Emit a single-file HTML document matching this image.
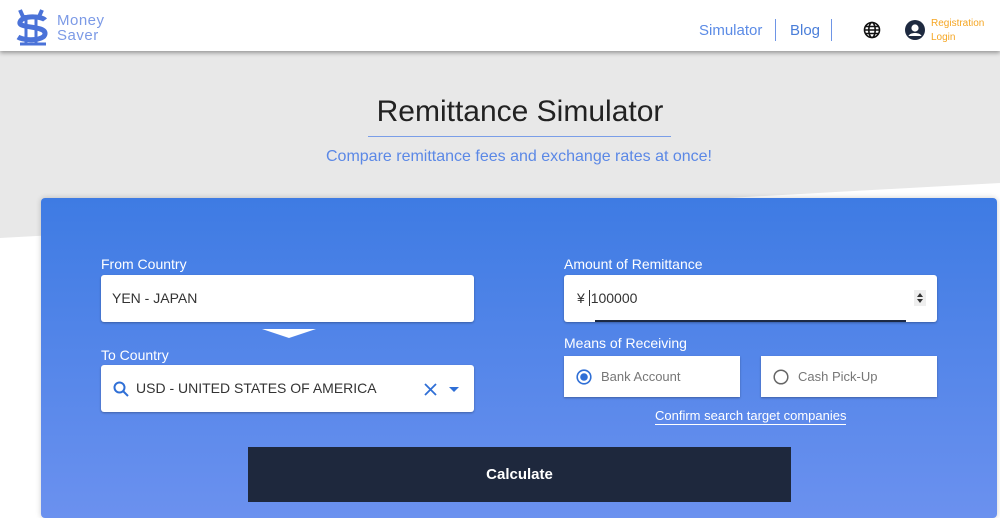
<!DOCTYPE html>
<html><head><meta charset="utf-8"><style>
*{box-sizing:border-box;margin:0;padding:0}
body{width:1000px;height:505px;overflow:hidden;background:#fff;font-family:"Liberation Sans",sans-serif;position:relative}
.hdr{position:absolute;left:0;top:0;width:1000px;height:51px;background:#fff;box-shadow:0 2px 4px rgba(0,0,0,.35);z-index:3}
.gray{position:absolute;left:0;top:51px;width:1000px;height:200px;background:#e8e8e8;clip-path:polygon(0 0,100% 0,100% 132px,0 187px)}
.abs{position:absolute}
.card{position:absolute;left:41px;top:198px;width:956px;height:320px;border-radius:4px;background:linear-gradient(#3e7be3,#6b91ef);box-shadow:0 0 6px rgba(0,0,0,.2)}
.lbl{position:absolute;color:#fff;font-size:14px}
.box{position:absolute;background:#fff;border-radius:3px;box-shadow:0 1px 2px rgba(0,0,0,.3);font-size:14px;color:#333}
</style></head><body>
<div class="gray"></div>
<div class="hdr">
<svg class="abs" style="left:14px;top:7px" width="38" height="40" viewBox="0 0 38 40">
<path d="M6 3 L10 12 M28 3 L24 12" stroke="#4a72d8" stroke-width="4"/>
<path d="M31 13 C28 9 8 8 6 15 C4 22 32 18 31 27 C30 34 10 34 4 30" fill="none" stroke="#4a72d8" stroke-width="5"/>
<path d="M12 8 V38 M22 8 V38" stroke="#4a72d8" stroke-width="3"/>
<path d="M6 37 L32 37" stroke="#4a72d8" stroke-width="3"/>
</svg>
<div class="abs" style="left:57px;top:13px;color:#7c9ae6;font-size:15px;line-height:15px;letter-spacing:.5px">Money<br>Saver</div>
<div class="abs" style="left:699px;top:22px;color:#5b8be6;font-size:15px">Simulator</div>
<div class="abs" style="left:775px;top:19px;width:1px;height:22px;background:#6e95e6"></div>
<div class="abs" style="left:790px;top:22px;color:#4a7ed9;font-size:15px">Blog</div>
<div class="abs" style="left:831px;top:19px;width:1px;height:22px;background:#6e95e6"></div>
<svg class="abs" style="left:863px;top:21px" width="18" height="18" viewBox="0 0 18 18" fill="none" stroke="#111" stroke-width="1.6"><circle cx="9" cy="9" r="7.5"/><ellipse cx="9" cy="9" rx="3.2" ry="7.5"/><path d="M1.5 9H16.5M2.5 5.5H15.5M2.5 12.5H15.5"/></svg>
<svg class="abs" style="left:905px;top:20px" width="20" height="20" viewBox="0 0 20 20"><circle cx="10" cy="10" r="10" fill="#1e2a40"/><circle cx="10" cy="8" r="3.6" fill="#fff"/><path d="M3.5 16 C5 12 15 12 16.5 16" fill="#fff"/></svg>
<div class="abs" style="left:931px;top:17px;color:#f5a623;font-size:10px;line-height:14px">Registration<br>Login</div>
</div>
<div class="abs" style="left:0;top:95px;width:1040px;text-align:center;color:#222;font-size:30px">Remittance Simulator</div>
<div class="abs" style="left:368px;top:136px;width:303px;height:1px;background:#7a9ee8"></div>
<div class="abs" style="left:0;top:148px;width:1038px;text-align:center;color:#5b88e6;font-size:16px">Compare remittance fees and exchange rates at once!</div>
<div class="card"></div>
<div class="lbl" style="left:101px;top:256px">From Country</div>
<div class="box" style="left:101px;top:275px;width:373px;height:47px;padding:15px 11px">YEN - JAPAN</div>
<svg class="abs" style="left:262px;top:329px" width="54" height="9"><path d="M0 0H54L27 9Z" fill="#fff"/></svg>
<div class="lbl" style="left:101px;top:347px">To Country</div>
<div class="box" style="left:101px;top:365px;width:373px;height:47px;padding:15px 0 0 35px">USD - UNITED STATES OF AMERICA</div>
<svg class="abs" style="left:113px;top:381px" width="16" height="16" fill="none" stroke="#2f6fd6" stroke-width="2"><circle cx="6.5" cy="6.5" r="5"/><path d="M10 10L15 15"/></svg>
<svg class="abs" style="left:424px;top:383px" width="13" height="13" stroke="#2f6fd6" stroke-width="1.8"><path d="M1 1L12 12M12 1L1 12"/></svg>
<svg class="abs" style="left:449px;top:387px" width="10" height="6"><path d="M0 0H10L5 5Z" fill="#2f6fd6"/></svg>
<div class="lbl" style="left:564px;top:256px">Amount of Remittance</div>
<div class="box" style="left:564px;top:275px;width:373px;height:47px;padding:15px 13px">¥ <span style="border-left:1px solid #333;padding-left:1px">100000</span></div>
<div class="abs" style="left:595px;top:320px;width:311px;height:2px;background:#1c2a44"></div>
<svg class="abs" style="left:914px;top:290px" width="12" height="16"><rect width="12" height="16" fill="#eee"/><path d="M3 7L6 3L9 7ZM3 9L6 13L9 9Z" fill="#333"/></svg>
<div class="lbl" style="left:564px;top:335px">Means of Receiving</div>
<div class="box" style="left:564px;top:356px;width:176px;height:41px;border-radius:0;padding:13px 0 0 37px;color:#777;font-size:13px">Bank Account</div>
<svg class="abs" style="left:576px;top:369px" width="16" height="16"><circle cx="8" cy="8" r="6.8" fill="none" stroke="#2f6fd6" stroke-width="1.6"/><circle cx="8" cy="8" r="3.8" fill="#2f6fd6"/></svg>
<div class="box" style="left:761px;top:356px;width:176px;height:41px;border-radius:0;padding:13px 0 0 37px;color:#777;font-size:13px">Cash Pick-Up</div>
<svg class="abs" style="left:773px;top:369px" width="16" height="16"><circle cx="8" cy="8" r="6.8" fill="none" stroke="#666" stroke-width="1.5"/></svg>
<div class="abs" style="left:655px;top:408px;color:#fff;font-size:13px;border-bottom:1px solid #fff;line-height:16px">Confirm search target companies</div>
<div class="abs" style="left:248px;top:447px;width:543px;height:55px;background:#1e283d;color:#fff;font-size:15px;font-weight:bold;text-align:center;line-height:55px">Calculate</div>
</body></html>
